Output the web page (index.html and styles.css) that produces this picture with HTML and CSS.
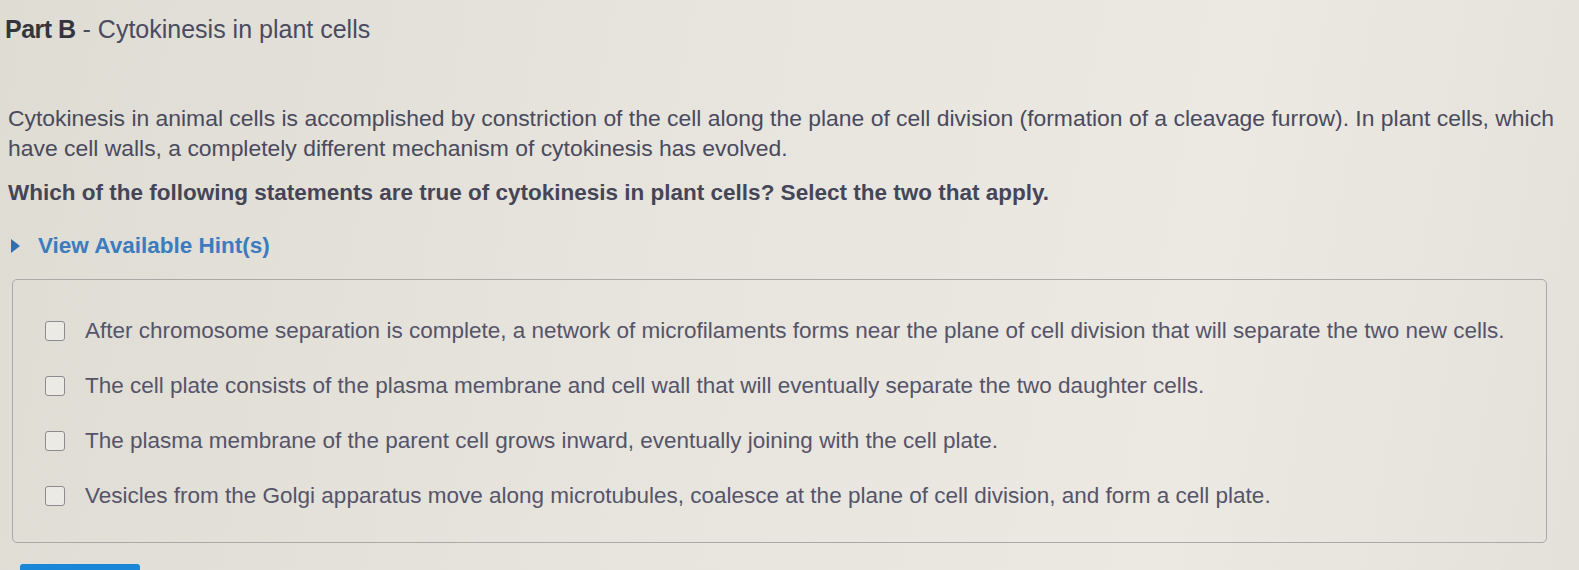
FILE: index.html
```html
<!DOCTYPE html>
<html>
<head>
<meta charset="utf-8">
<link rel="stylesheet" href="styles.css">
</head>
<body>
<div class="page">
  <h1 class="title"><span class="part">Part B</span> - Cytokinesis in plant cells</h1>
  <p class="intro">Cytokinesis in animal cells is accomplished by constriction of the cell along the plane of cell division (formation of a cleavage furrow). In plant cells, which have cell walls, a completely different mechanism of cytokinesis has evolved.</p>
  <p class="question">Which of the following statements are true of cytokinesis in plant cells? Select the two that apply.</p>
  <div class="hint"><span class="tri"></span>View Available Hint(s)</div>
  <div class="box">
    <label class="opt"><span class="cb"></span><span>After chromosome separation is complete, a network of microfilaments forms near the plane of cell division that will separate the two new cells.</span></label>
    <label class="opt"><span class="cb"></span><span>The cell plate consists of the plasma membrane and cell wall that will eventually separate the two daughter cells.</span></label>
    <label class="opt"><span class="cb"></span><span>The plasma membrane of the parent cell grows inward, eventually joining with the cell plate.</span></label>
    <label class="opt"><span class="cb"></span><span>Vesicles from the Golgi apparatus move along microtubules, coalesce at the plane of cell division, and form a cell plate.</span></label>
  </div>
  <div class="submit"></div>
</div>
</body>
</html>
```
FILE: styles.css
```css
html, body {
  margin: 0;
  padding: 0;
}
body {
  width: 1579px;
  height: 570px;
  overflow: hidden;
  background: linear-gradient(100deg, #dedcd3 0%, #e6e4dc 40%, #ebe9e2 75%, #e3e1d9 100%);
  font-family: "Liberation Sans", Arial, sans-serif;
  color: #4c4b5c;
}
.page {
  padding: 14px 0 0 5px;
}
.title {
  margin: 0;
  font-size: 25px;
  font-weight: normal;
  color: #4a4a62;
  line-height: 30px;
}
.part {
  color: #34343e;
  font-weight: bold;
  letter-spacing: -0.5px;
}
.intro {
  margin: 59px 0 0 3px;
  width: 1565px;
  font-size: 22.9px;
  line-height: 30px;
  color: #4a4a5e;
}
.question {
  margin: 15px 0 0 3px;
  font-size: 22.5px;
  font-weight: bold;
  line-height: 30px;
  color: #454558;
}
.hint {
  margin: 23px 0 0 6px;
  display: flex;
  align-items: center;
  font-size: 22.5px;
  font-weight: bold;
  color: #3b7cc0;
  line-height: 30px;
}
.tri {
  width: 0;
  height: 0;
  border-top: 7px solid transparent;
  border-bottom: 7px solid transparent;
  border-left: 9px solid #2f6fb2;
  margin-right: 18px;
}
.box {
  margin: 18px 0 0 7px;
  width: 1535px;
  height: 264px;
  box-sizing: border-box;
  border: 1px solid #aaa9a6;
  border-radius: 5px;
  padding: 36px 0 0 32px;
  display: flex;
  flex-direction: column;
  gap: 25px;
}
.opt {
  display: flex;
  align-items: center;
  font-size: 22.5px;
  line-height: 30px;
  color: #55546a;
}
.cb {
  width: 18px;
  height: 18px;
  border: 1.5px solid #8c8b92;
  border-radius: 3px;
  background: #eceae4;
  margin-right: 20px;
  flex: none;
}
.submit {
  margin: 21px 0 0 15px;
  width: 120px;
  height: 20px;
  background: #1a86d8;
  border-radius: 3px 3px 0 0;
}
```
